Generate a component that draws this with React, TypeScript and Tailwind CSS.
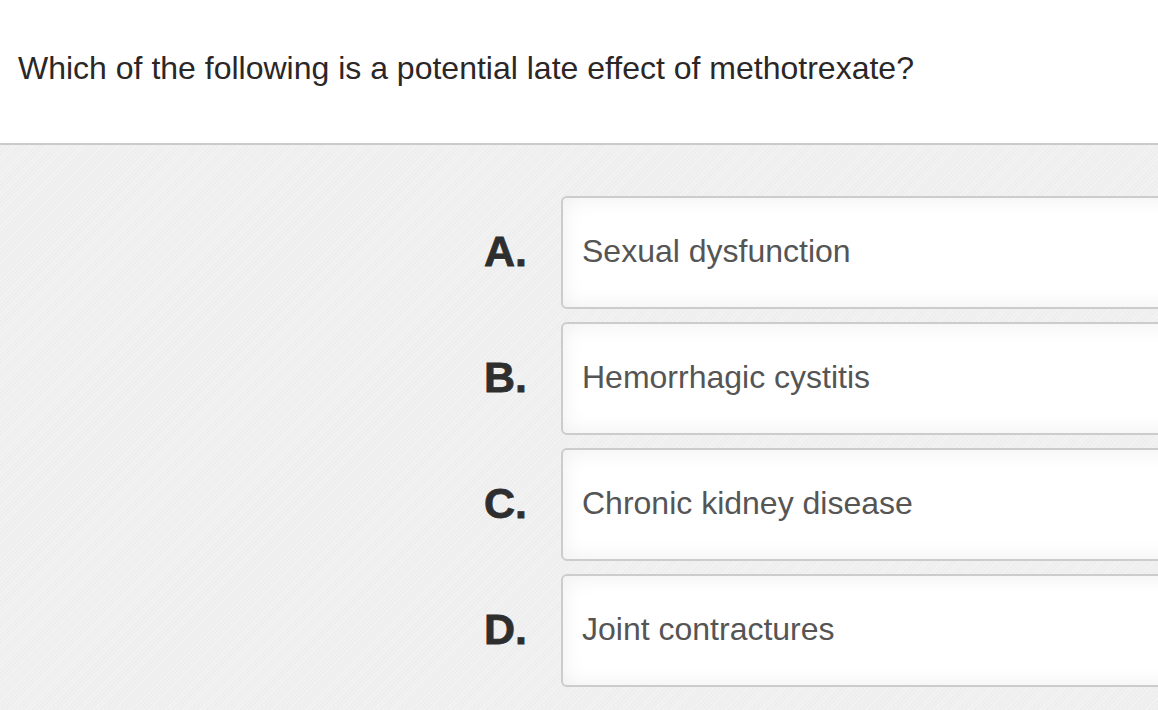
import React from "react";

const CHOICES = [
  { letter: "A.", text: "Sexual dysfunction" },
  { letter: "B.", text: "Hemorrhagic cystitis" },
  { letter: "C.", text: "Chronic kidney disease" },
  { letter: "D.", text: "Joint contractures" },
];

export default function App() {
  return (
    <div className="h-[710px] w-full overflow-hidden bg-white font-['Liberation_Sans',Arial,sans-serif]">
      {/* question header */}
      <header className="h-[145px] border-b-2 border-[#cacaca] bg-white pl-[18px] pt-[50px]">
        <h1 className="text-[32px] leading-[36px] text-[#2b2727]">
          Which of the following is a potential late effect of methotrexate?
        </h1>
      </header>

      {/* answer choices */}
      <section className="h-full bg-[#eeeeee] bg-[repeating-linear-gradient(135deg,rgba(255,255,255,0.3)_0px,rgba(255,255,255,0.3)_1px,transparent_1px,transparent_3px)] pl-[484px] pt-[51px]">
        <ul className="flex flex-col gap-[13px]">
          {CHOICES.map(({ letter, text }) => (
            <li key={letter} className="flex items-center">
              <span className="w-[77px] shrink-0 pb-[4px] text-[43px] font-bold leading-[48px] text-[#2e2e2e] [-webkit-text-stroke:0.8px_#2e2e2e] [text-shadow:0_1px_1px_#ffffff]">
                {letter}
              </span>
              <div className="flex h-[113px] w-[640px] shrink-0 items-center rounded-[6px] border-2 border-[#cccccc] bg-white pb-[3px] pl-[19px] shadow-[inset_0_0_22px_rgba(0,0,0,0.07)]">
                <span className="text-[32px] leading-[36px] text-[#555555]">
                  {text}
                </span>
              </div>
            </li>
          ))}
        </ul>
      </section>
    </div>
  );
}
